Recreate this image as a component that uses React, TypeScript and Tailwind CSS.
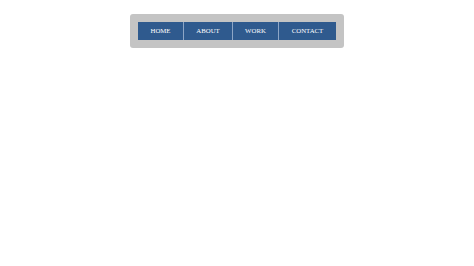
const items = [
  { label: 'HOME', w: 'w-[46px]' },
  { label: 'ABOUT', w: 'w-[49px]' },
  { label: 'WORK', w: 'w-[46px]' },
  { label: 'CONTACT', w: 'w-[57px]' },
];

const App = () => {
  return (
    <div className="w-[474px] h-[266px] bg-white pt-[14px]">
      <nav className="mx-auto w-[214px] rounded-[3px] bg-[#c4c4c4] p-[8px]">
        <ul className="flex h-[18px] bg-[#2f5a8e]">
          {items.map((item, i) => (
            <li
              key={item.label}
              className={
                item.w +
                ' flex items-center justify-center pt-px text-[6.8px] text-white font-["Liberation_Serif",serif] leading-none ' +
                (i < items.length - 1 ? 'border-r border-[#8ea6c6]' : '')
              }
            >
              {item.label}
            </li>
          ))}
        </ul>
      </nav>
    </div>
  );
};

export default App;
